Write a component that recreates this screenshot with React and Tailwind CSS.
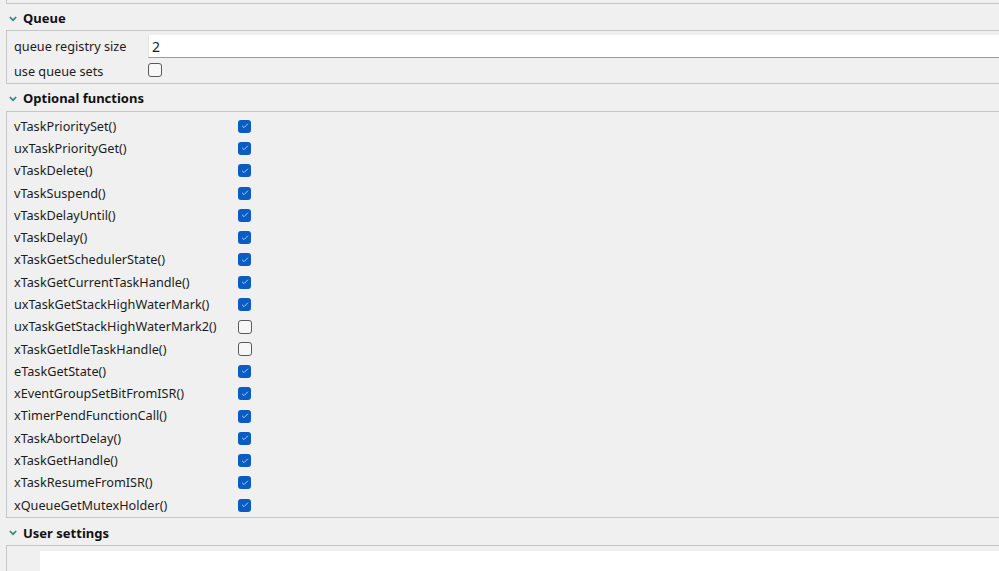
import { Check } from 'lucide-react'

const fns = [
  ['vTaskPrioritySet()', true],
  ['uxTaskPriorityGet()', true],
  ['vTaskDelete()', true],
  ['vTaskSuspend()', true],
  ['vTaskDelayUntil()', true],
  ['vTaskDelay()', true],
  ['xTaskGetSchedulerState()', true],
  ['xTaskGetCurrentTaskHandle()', true],
  ['uxTaskGetStackHighWaterMark()', true],
  ['uxTaskGetStackHighWaterMark2()', false],
  ['xTaskGetIdleTaskHandle()', false],
  ['eTaskGetState()', true],
  ['xEventGroupSetBitFromISR()', true],
  ['xTimerPendFunctionCall()', true],
  ['xTaskAbortDelay()', true],
  ['xTaskGetHandle()', true],
  ['xTaskResumeFromISR()', true],
  ['xQueueGetMutexHolder()', true],
]

function Box({ checked }) {
  if (checked) {
    return (
      <span className="w-[13px] h-[13px] rounded-[3px] bg-[#0a5cc2] flex items-center justify-center">
        <Check size={8} strokeWidth={2.5} className="text-[#cfe0f5]" />
      </span>
    )
  }
  return <span className="w-[14px] h-[14px] rounded-[3px] border border-[#5a5a5a] bg-[#f7f7f7]" />
}

function Header({ title, h }) {
  return (
    <div className={`${h} flex items-center pl-[9px] gap-[6px] pt-[3px]`}>
      <svg width="8" height="6" viewBox="0 0 8 6">
        <path d="M0.8 1 L4 4.2 L7.2 1" fill="none" stroke="#2f8a78" strokeWidth="1.7" />
      </svg>
      <span className="font-bold text-[13px] text-[#111]">{title}</span>
    </div>
  )
}

export default function App() {
  return (
    <div className="w-[999px] h-[571px] overflow-hidden bg-[#f0f0f0] text-[12.7px] text-[#1c1c1c]" style={{ fontFamily: '"Noto Sans", "Open Sans", sans-serif' }}>
      <div className="h-[4px] ml-[6px] -mr-[4px] border-l border-b border-[#c6c6c6]" />
      <Header title="Queue" h="h-[26px]" />
      <div className="ml-[6px] -mr-[4px] border border-[#c6c6c6] pt-[4px] pb-[1px]">
        <div className="flex items-center h-[23px]">
          <span className="w-[141px] pl-[7px] pt-[1px]">queue registry size</span>
          <div className="flex-1 h-[23px] bg-white border-b border-[#9a9a9a] border-l border-l-[#e4e4e4] flex items-center pl-[3px] text-[14px]">2</div>
        </div>
        <div className="flex items-center h-[24px]">
          <span className="w-[141px] pl-[7px] pt-[3px]">use queue sets</span>
          <Box checked={false} />
        </div>
      </div>
      <Header title="Optional functions" h="h-[27px]" />
      <div className="ml-[6px] -mr-[4px] border border-[#c6c6c6] pt-[3px] pb-[1px]">
        {fns.map(([name, on]) => (
          <div key={name} className="flex items-center h-[22.3px]">
            <span className="w-[231px] pl-[7px] whitespace-nowrap">{name}</span>
            <Box checked={on} />
          </div>
        ))}
      </div>
      <Header title="User settings" h="h-[27px]" />
      <div className="ml-[6px] -mr-[4px] border-l border-t border-[#c6c6c6] h-[40px] pt-[5px] pl-[33px]">
        <div className="bg-white h-full" />
      </div>
    </div>
  )
}
